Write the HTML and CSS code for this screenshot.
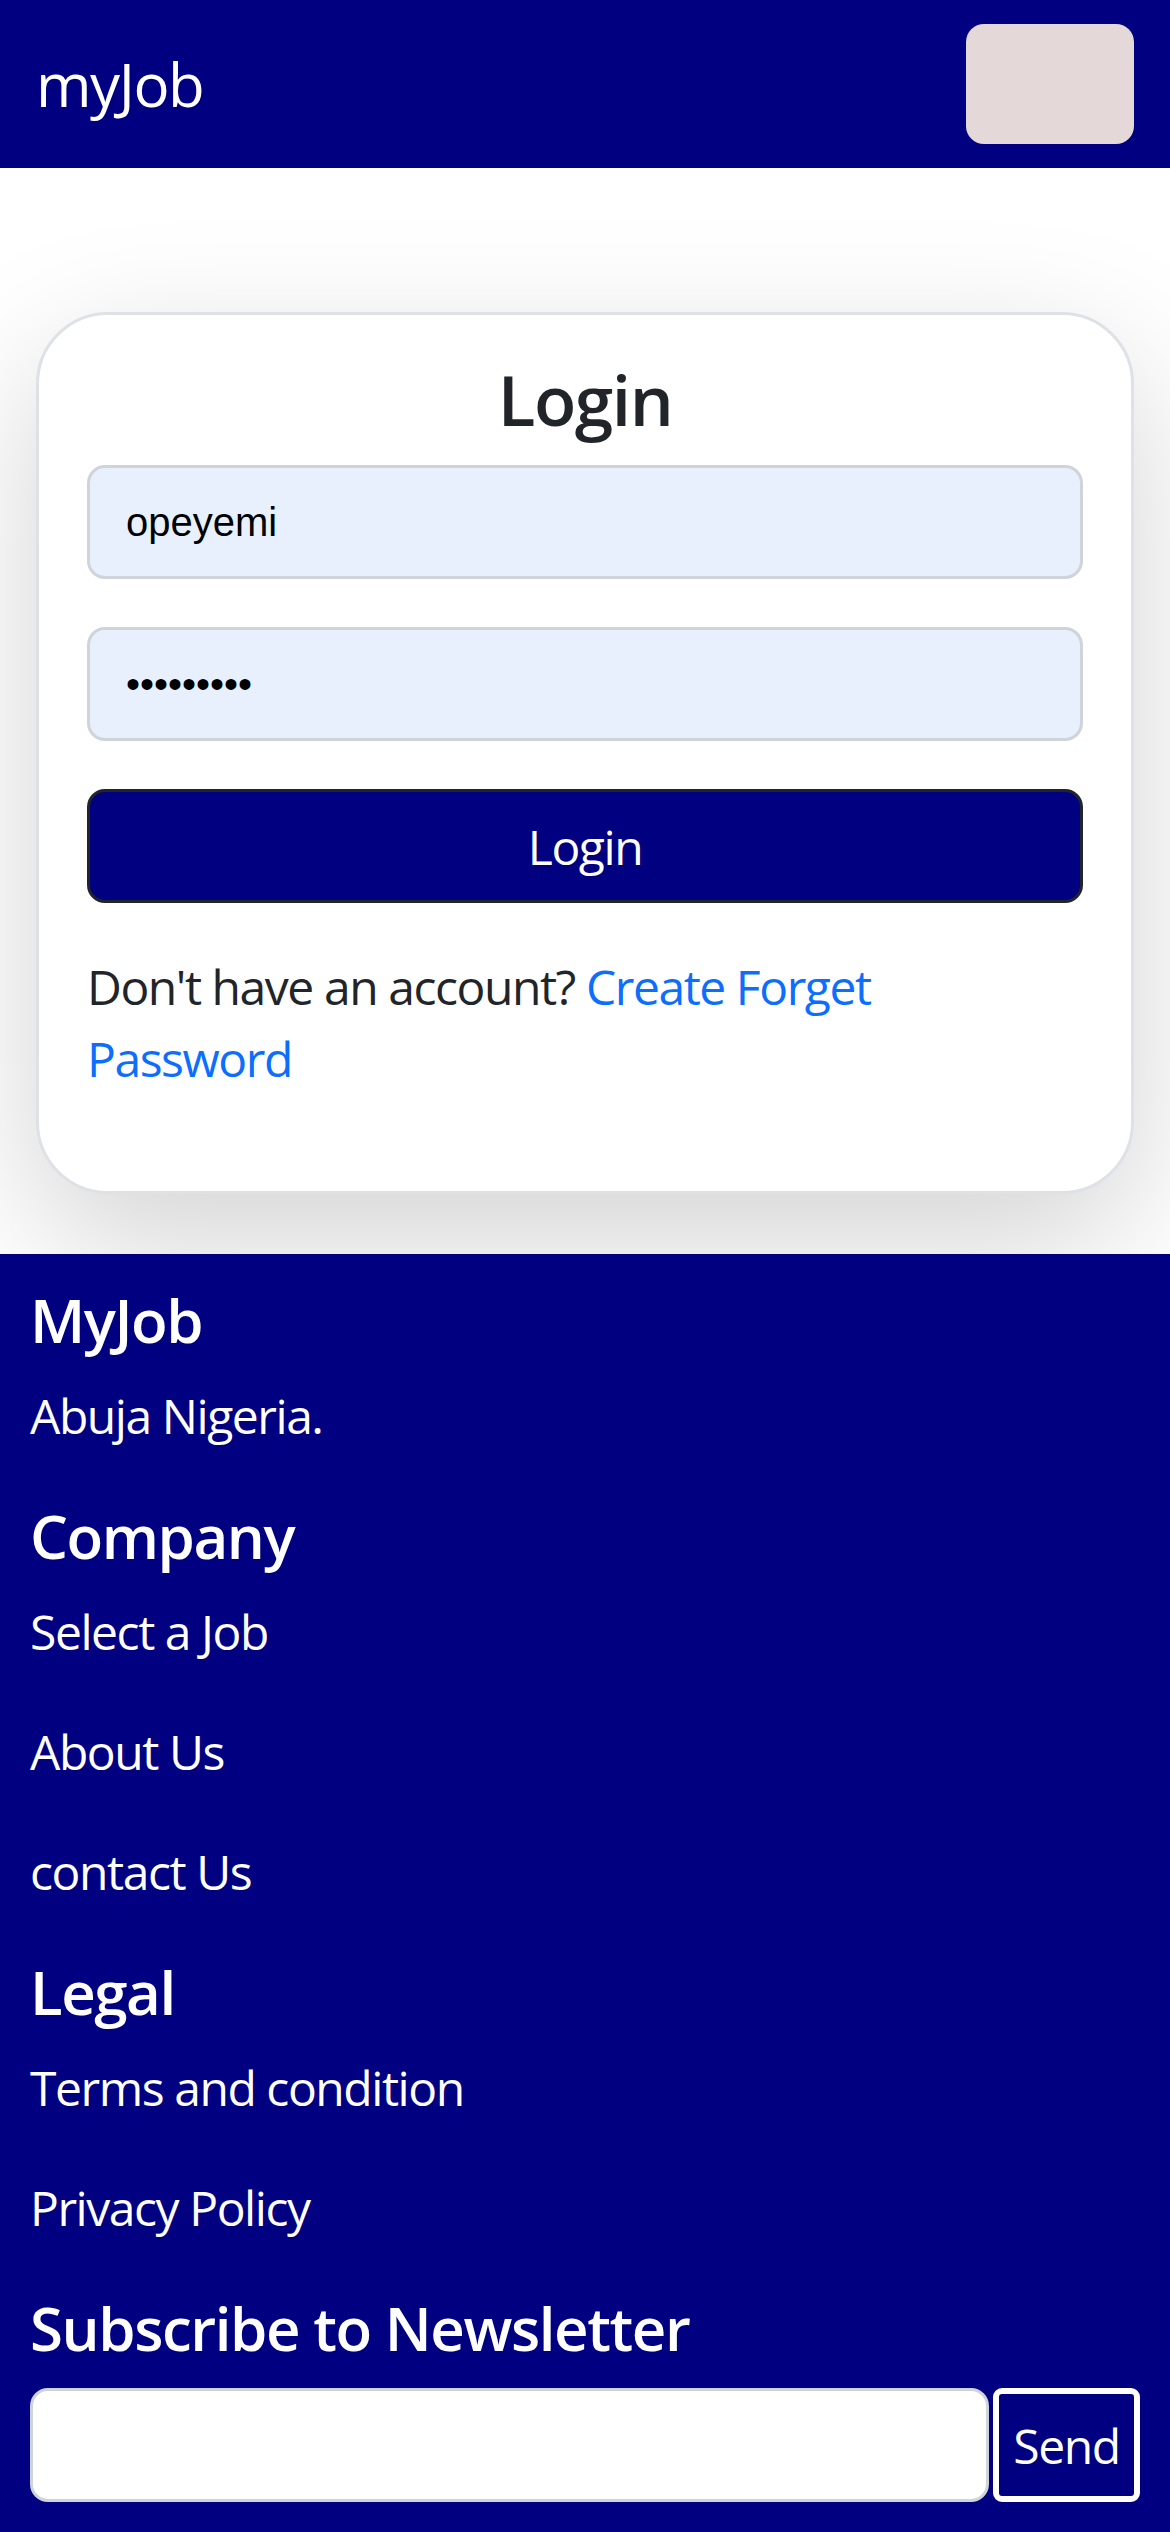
FILE: index.html
```html
<!DOCTYPE html>
<html lang="en">
<head>
  <meta charset="UTF-8" />
  <meta name="viewport" content="width=device-width, initial-scale=1.0" />
  <title>myJob - Login</title>
  <link rel="stylesheet" href="styles.css">
</head>
<body>
  <nav class="navbar">
    <a class="brand" href="#">myJob</a>
    <button class="toggler" type="button" aria-label="Toggle navigation"></button>
  </nav>

  <main class="page">
    <div class="login-card">
      <h3 class="login-title">Login</h3>
      <form class="login-form">
        <input class="field" type="text" name="username" value="opeyemi">
        <input class="field" type="password" name="password" value="123456789">
        <button class="btn-login" type="button">Login</button>
        <p class="signup">Don't have an account? <a href="#">Create</a> <a href="#">Forget Password</a></p>
      </form>
    </div>
  </main>

  <footer class="footer">
    <h5>MyJob</h5>
    <p>Abuja Nigeria.</p>

    <h5>Company</h5>
    <p><a href="#">Select a Job</a></p>
    <p><a href="#">About Us</a></p>
    <p><a href="#">contact Us</a></p>

    <h5>Legal</h5>
    <p><a href="#">Terms and condition</a></p>
    <p><a href="#">Privacy Policy</a></p>

    <h5>Subscribe to Newsletter</h5>
    <div class="newsletter">
      <input class="news-input" type="email" name="email">
      <button class="btn-send" type="button">Send</button>
    </div>
  </footer>
</body>
</html>
```

FILE: styles.css
```css
html {
  font-size: 48px;
}
body {
  margin: 0;
  font-family: "Open Sans", "Noto Sans", sans-serif;
  font-size: 1rem;
  line-height: 1.5;
  letter-spacing: -0.03em;
  color: #212529;
  background-color: #fff;
}
a {
  text-decoration: none;
}

/* navbar */
.navbar {
  background-color: #000080;
  display: flex;
  align-items: center;
  justify-content: space-between;
  padding: .5rem .75rem;
}
.brand {
  color: #fff;
  font-size: 1.25rem;
  line-height: 1.5;
}
.toggler {
  width: 3.5rem;
  height: 2.5rem;
  background-color: #e5d8d8;
  border: none;
  border-radius: .375rem;
}

/* login card */
.page {
  padding: 0 .75rem;
}
.login-card {
  margin: 3rem 0 1.25rem;
  padding: .9rem 1rem 1rem;
  border: 3px solid #dee2e6;
  border-radius: 1.5rem;
  background-color: #fff;
  box-shadow: 0 1rem 3rem rgba(0,0,0,.175);
}
.login-title {
  margin: 0 0 .5rem;
  font-size: 1.445rem;
  font-weight: 600;
  line-height: 1.2;
  text-align: center;
}
.field {
  display: block;
  box-sizing: border-box;
  width: 100%;
  height: 2.375rem;
  margin-bottom: 1rem;
  padding: 0 .75rem;
  font-family: "Liberation Sans", Arial, sans-serif;
  font-size: 40px;
  letter-spacing: 0;
  color: #000;
  background-color: #e8f0fe;
  border: 3px solid #ced4da;
  border-radius: .375rem;
}
.btn-login {
  display: block;
  width: 100%;
  height: 2.375rem;
  font-family: inherit;
  font-size: 1rem;
  letter-spacing: inherit;
  color: #fff;
  background-color: #000080;
  border: 3px solid #212529;
  border-radius: .375rem;
}
.signup {
  margin: 1rem 0;
}
.signup a {
  color: #0d6efd;
}

/* footer */
.footer {
  background-color: #000080;
  color: #fff;
  padding: .625rem .625rem 1rem;
}
.footer h5 {
  margin: 0 0 .5rem;
  font-size: 1.25rem;
  font-weight: 600;
  line-height: 1.2;
}
.footer p {
  margin: 0 0 1rem;
}
.footer a {
  color: #fff;
}
.newsletter {
  display: flex;
  gap: 4px;
}
.news-input {
  flex: 1;
  height: 2.375rem;
  box-sizing: border-box;
  background-color: #fff;
  border: 3px solid #ced4da;
  border-radius: .375rem;
}
.btn-send {
  height: 2.375rem;
  padding: 0 .3rem;
  font-family: inherit;
  font-size: 1rem;
  letter-spacing: inherit;
  color: #fff;
  background-color: #000080;
  border: 6px solid #fff;
  border-radius: 9px;
}
```
